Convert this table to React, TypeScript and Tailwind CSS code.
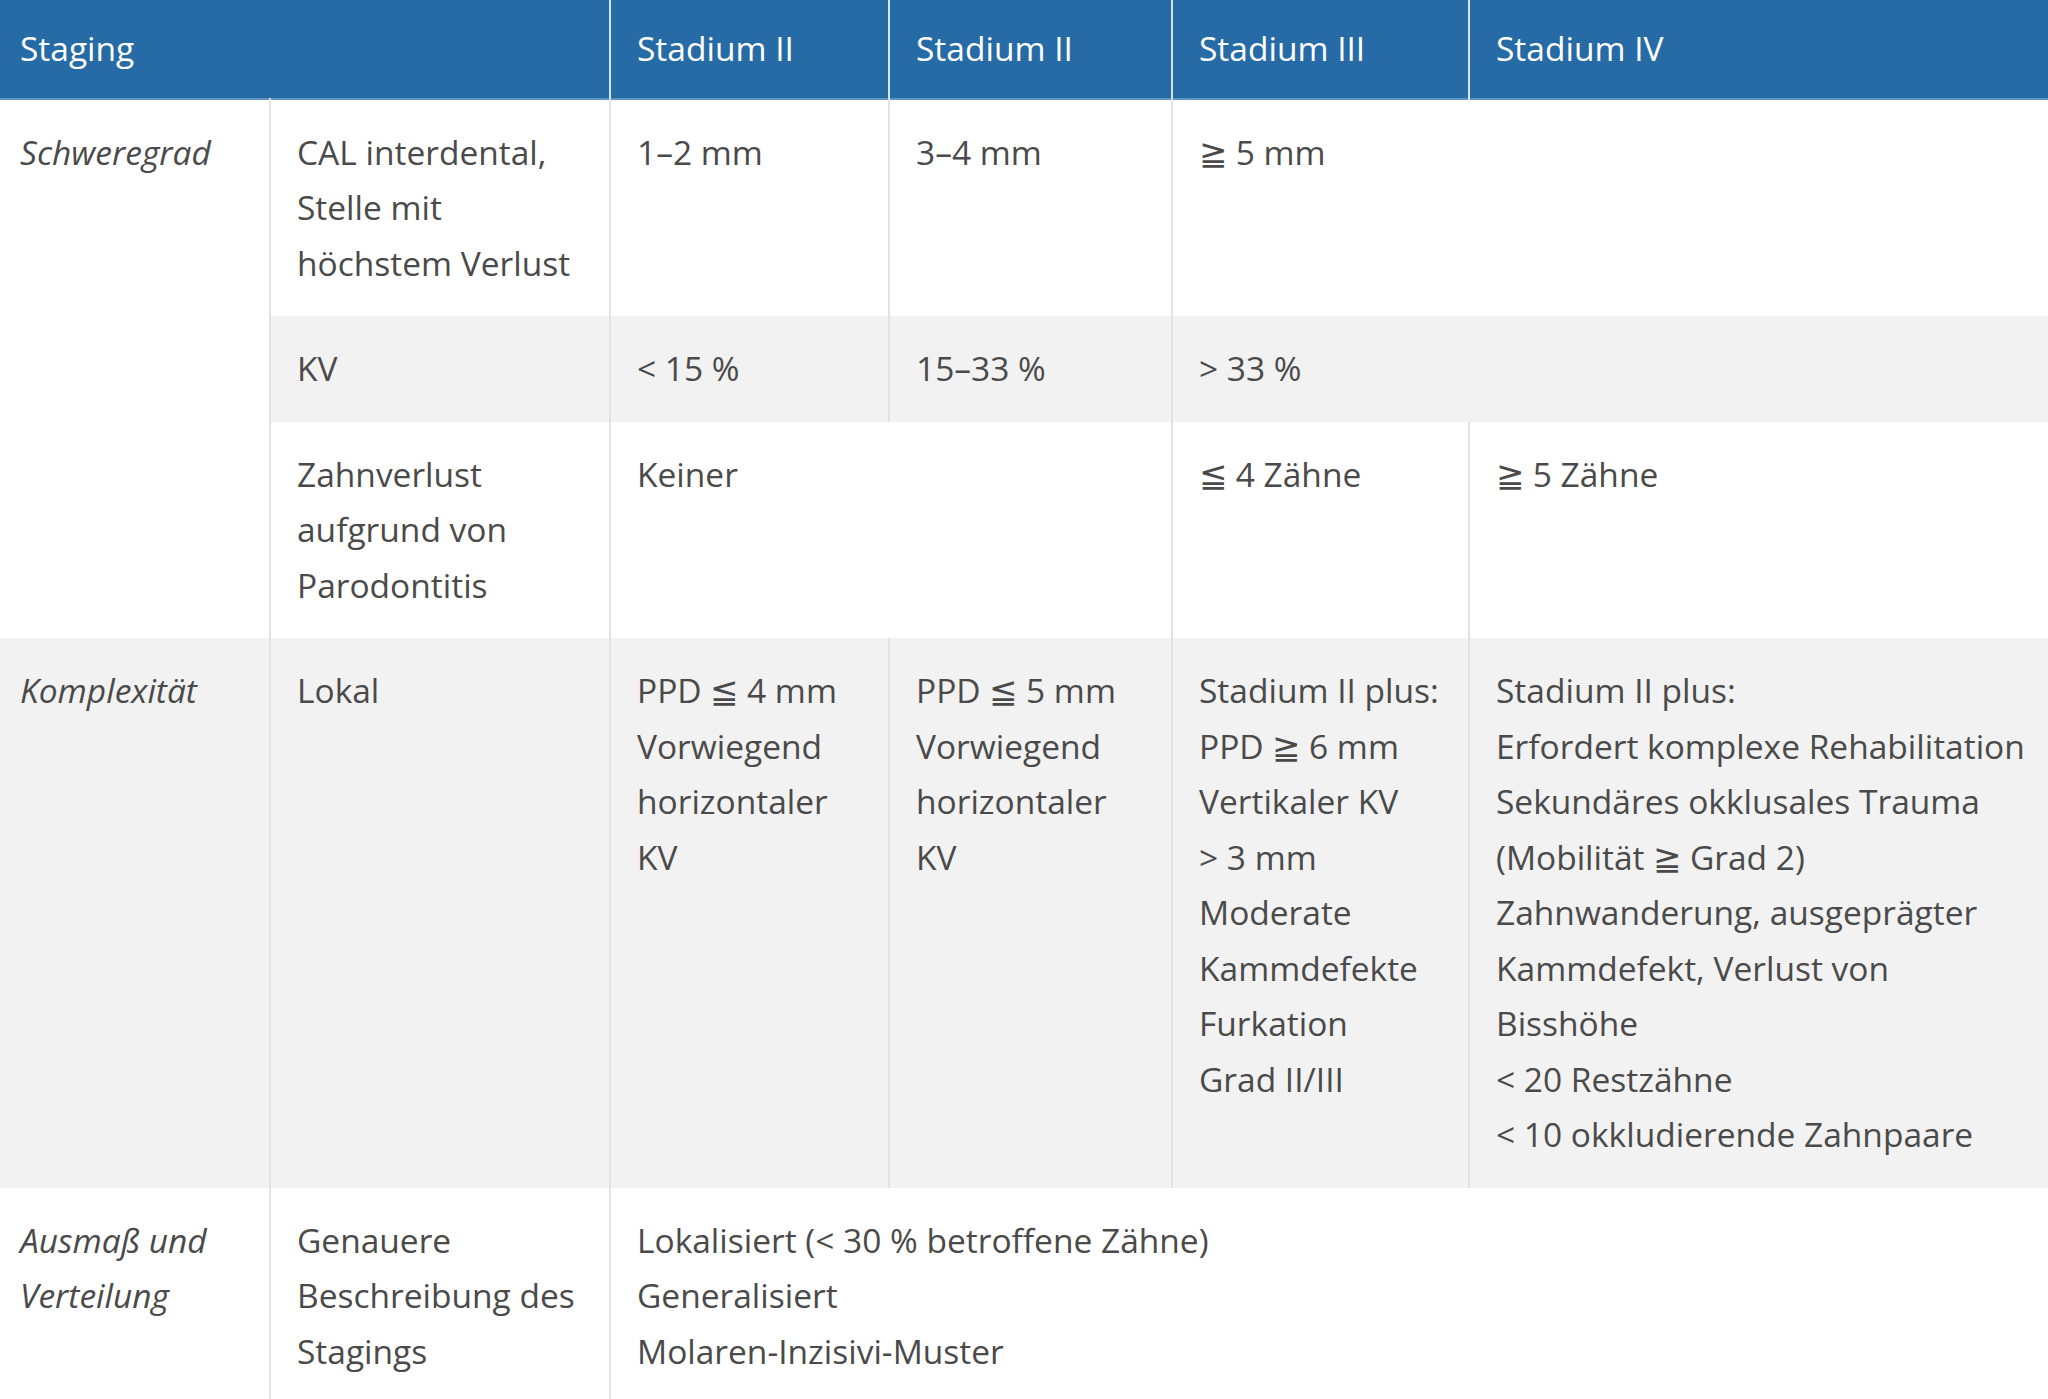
import React from "react";

const font = { fontFamily: '"Open Sans", "Noto Sans", sans-serif' };

function Lines({ items }: { items: string[] }) {
  return (
    <>
      {items.map((t, i) => (
        <div key={i} className="whitespace-nowrap">
          {t}
        </div>
      ))}
    </>
  );
}

export default function App() {
  const td = "align-top pl-[26px] pr-[4px] py-[25px] border-l-2 border-[#e2e2e2]";
  const th = "text-left font-normal align-middle pl-[26px] pr-[4px] py-[21px] border-l-2 border-[#d5e2ef]";
  const first = "align-top pl-[20px] pr-[4px] py-[25px] italic";
  return (
    <div className="w-[2048px] min-h-[1399px] bg-white text-[#4a4a4a] text-[33.5px] leading-[55.5px]" style={font}>
      <table className="w-[2048px] table-fixed border-collapse">
        <colgroup>
          <col className="w-[270px]" />
          <col className="w-[340px]" />
          <col className="w-[279px]" />
          <col className="w-[283px]" />
          <col className="w-[297px]" />
          <col className="w-[579px]" />
        </colgroup>
        <thead>
          <tr className="bg-[#266ba5] text-white border-b-2 border-[#5f94c4]">
            <th colSpan={2} className="text-left font-normal align-middle pl-[20px] pr-[4px] py-[21px]">Staging</th>
            <th className={th}>Stadium II</th>
            <th className={th}>Stadium II</th>
            <th className={th}>Stadium III</th>
            <th className={th}>Stadium IV</th>
          </tr>
        </thead>
        <tbody>
          <tr className="bg-white">
            <td rowSpan={3} className={first + " bg-white"}>Schweregrad</td>
            <td className={td}>
              <Lines items={["CAL interdental,", "Stelle mit", "höchstem Verlust"]} />
            </td>
            <td className={td}>1–2 mm</td>
            <td className={td}>3–4 mm</td>
            <td colSpan={2} className={td}>≧ 5 mm</td>
          </tr>
          <tr className="bg-[#f2f2f2]">
            <td className={td}>KV</td>
            <td className={td}>&lt; 15 %</td>
            <td className={td}>15–33 %</td>
            <td colSpan={2} className={td}>&gt; 33 %</td>
          </tr>
          <tr className="bg-white">
            <td className={td}>
              <Lines items={["Zahnverlust", "aufgrund von", "Parodontitis"]} />
            </td>
            <td colSpan={2} className={td}>Keiner</td>
            <td className={td}>≦ 4 Zähne</td>
            <td className={td}>≧ 5 Zähne</td>
          </tr>
          <tr className="bg-[#f2f2f2]">
            <td className={first}>Komplexität</td>
            <td className={td}>Lokal</td>
            <td className={td}>
              <Lines items={["PPD ≦ 4 mm", "Vorwiegend", "horizontaler", "KV"]} />
            </td>
            <td className={td}>
              <Lines items={["PPD ≦ 5 mm", "Vorwiegend", "horizontaler", "KV"]} />
            </td>
            <td className={td}>
              <Lines
                items={[
                  "Stadium II plus:",
                  "PPD ≧ 6 mm",
                  "Vertikaler KV",
                  "> 3 mm",
                  "Moderate",
                  "Kammdefekte",
                  "Furkation",
                  "Grad II/III",
                ]}
              />
            </td>
            <td className={td}>
              <Lines
                items={[
                  "Stadium II plus:",
                  "Erfordert komplexe Rehabilitation",
                  "Sekundäres okklusales Trauma",
                  "(Mobilität ≧ Grad 2)",
                  "Zahnwanderung, ausgeprägter",
                  "Kammdefekt, Verlust von",
                  "Bisshöhe",
                  "< 20 Restzähne",
                  "< 10 okkludierende Zahnpaare",
                ]}
              />
            </td>
          </tr>
          <tr className="bg-white">
            <td className={first}>
              <Lines items={["Ausmaß und", "Verteilung"]} />
            </td>
            <td className={td}>
              <Lines items={["Genauere", "Beschreibung des", "Stagings"]} />
            </td>
            <td colSpan={4} className={td}>
              <Lines items={["Lokalisiert (< 30 % betroffene Zähne)", "Generalisiert", "Molaren-Inzisivi-Muster"]} />
            </td>
          </tr>
        </tbody>
      </table>
    </div>
  );
}
